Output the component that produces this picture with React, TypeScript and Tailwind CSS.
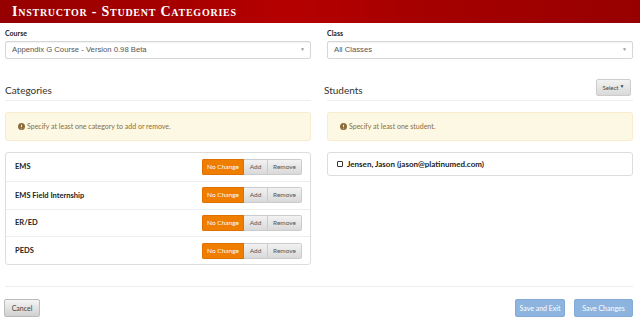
const categories = ['EMS', 'EMS Field Internship', 'ER/ED', 'PEDS'];

const AlertIcon = () => (
  <svg viewBox="0 0 16 16" className="w-[7px] h-[7px] inline-block mr-[2px] -mt-[1px]">
    <circle cx="8" cy="8" r="8" fill="#8a6d3b" />
    <rect x="7" y="3.5" width="2" height="6" rx="0.8" fill="#fcf8e3" />
    <rect x="7" y="10.8" width="2" height="2" rx="0.8" fill="#fcf8e3" />
  </svg>
);

const SelectBox = ({ label, value }: { label: string; value: string }) => (
  <div>
    <div className="text-[7px] font-bold text-[#222] leading-none mt-[7px] mb-[4px]">{label}</div>
    <div className="h-[18px] border border-[#d6d6d6] rounded-[2px] bg-white flex items-center justify-between pl-[6px] pr-[5px] shadow-[inset_0_1px_1px_rgba(0,0,0,0.05)]">
      <span className="text-[7.7px] text-[#555] font-['Liberation_Sans',sans-serif]">{value}</span>
      <span className="text-[5px] text-[#999]">▼</span>
    </div>
  </div>
);

const Alert = ({ text }: { text: string }) => (
  <div className="h-[29px] mt-[11px] bg-[#fcf8e3] border border-[#faebcc] rounded-[3px] flex items-center pl-[12px] text-[7px] text-[#8a6d3b]">
    <AlertIcon />
    {text}
  </div>
);

export default function App() {
  return (
    <div className="w-[640px] h-[324px] bg-white font-['Lato',sans-serif] text-[#333] overflow-hidden">
      {/* Header */}
      <div className="h-[23px] bg-[linear-gradient(90deg,#960000_0%,#a80000_30%,#b60000_45%,#a60000_65%,#980000_100%)] flex items-center px-[12px]">
        <h1 className="text-white font-['Liberation_Serif',serif] font-bold text-[14px] [font-variant:small-caps] tracking-[0.75px] leading-none">
          Instructor - Student Categories
        </h1>
      </div>

      <div className="pl-[5px] pr-[7px]">
        {/* Selects */}
        <div className="grid grid-cols-2 gap-[16px]">
          <SelectBox label="Course" value="Appendix G Course - Version 0.98 Beta" />
          <SelectBox label="Class" value="All Classes" />
        </div>

        <div className="grid grid-cols-2 gap-[16px] mt-[19px]">
          {/* Categories */}
          <div>
            <div className="h-[23px] border-b border-[#eee] flex items-center">
              <span className="text-[10px] text-[#333] mt-[2px]">Categories</span>
            </div>
            <Alert text="Specify at least one category to add or remove." />
            <div className="mt-[11px] border border-[#ddd] rounded-[3px]">
              {categories.map((c, i) => (
                <div
                  key={c}
                  className={`h-[27.75px] flex items-center justify-between pl-[9px] pr-[8px] ${i > 0 ? 'border-t border-[#eee]' : ''}`}
                >
                  <span className="text-[7.5px] font-bold text-[#222]">{c}</span>
                  <div className="flex h-[16px] rounded-[2px] overflow-hidden text-[6.5px]">
                    <button className="w-[42px] bg-[#ee7d00] text-white border border-[#e07000]">No Change</button>
                    <button className="w-[23px] bg-[linear-gradient(#f2f2f2,#d9d9d9)] text-[#555] border-y border-[#ccc]">Add</button>
                    <button className="w-[35px] bg-[linear-gradient(#f2f2f2,#d9d9d9)] text-[#555] border border-[#ccc]">Remove</button>
                  </div>
                </div>
              ))}
            </div>
          </div>

          {/* Students */}
          <div>
            <div className="h-[23px] border-b border-[#eee] flex items-center justify-between">
              <span className="text-[10px] text-[#333] mt-[2px] -ml-[3px]">Students</span>
              <button className="w-[35px] h-[17px] -mt-[4px] mr-[2px] rounded-[2px] border border-[#ccc] bg-[linear-gradient(#f2f2f2,#d9d9d9)] text-[6px] text-[#444] flex items-center justify-center gap-[1px]">
                Select
                <span className="text-[5px]">▼</span>
              </button>
            </div>
            <Alert text="Specify at least one student." />
            <div className="mt-[11px] h-[24px] border border-[#ddd] rounded-[3px] flex items-center pl-[9px] text-[8px] font-bold text-[#222]">
              <span className="w-[6px] h-[6px] border border-[#333] rounded-[1px] mr-[4px]" />
              Jensen, Jason (jason@platinumed.com)
            </div>
          </div>
        </div>

        {/* Footer */}
        <div className="mt-[21px] border-t border-[#eee] pt-[12px] flex justify-between">
          <button className="w-[36px] h-[18px] -ml-[1px] rounded-[2px] border border-[#bbb] bg-[linear-gradient(#f5f5f5,#d0d0d0)] text-[7px] text-[#444]">
            Cancel
          </button>
          <div className="flex gap-[9px]">
            <button className="w-[50px] h-[18px] rounded-[2px] bg-[#8db4de] border border-[#84aad6] text-[7px] text-white">
              Save and Exit
            </button>
            <button className="w-[59px] h-[18px] rounded-[2px] bg-[#8db4de] border border-[#84aad6] text-[7px] text-white">
              Save Changes
            </button>
          </div>
        </div>
      </div>
    </div>
  );
}
